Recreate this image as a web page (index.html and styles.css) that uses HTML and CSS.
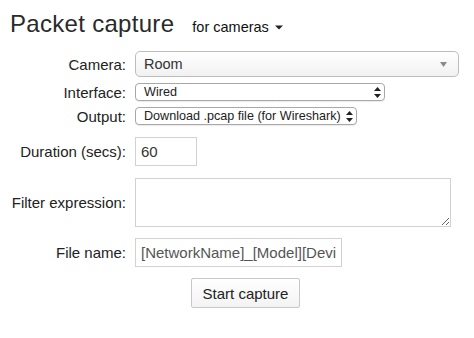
FILE: index.html
```html
<!DOCTYPE html>
<html>
<head>
<meta charset="utf-8">
<link rel="stylesheet" href="styles.css">
</head>
<body>
<div class="page">
  <div class="header">
    <h1 class="title">Packet capture</h1>
    <span class="scope">for cameras <svg class="caret" width="8" height="5" viewBox="0 0 8 5"><path d="M0 0.5H8L4 4.5Z" fill="#222"/></svg></span>
  </div>
  <form class="form">
    <div class="row row-camera">
      <label class="label">Camera:</label>
      <span class="select-wrap">
        <select class="select-big"><option>Room</option></select>
        <svg class="tri" width="7" height="5" viewBox="0 0 7 5"><path d="M0 0H7L3.5 5Z" fill="#8a8a8a"/></svg>
      </span>
    </div>
    <div class="row row-tight">
      <label class="label">Interface:</label>
      <span class="select-wrap">
        <select class="select-small sel-interface"><option>Wired</option></select>
        <svg class="updown" width="7" height="11" viewBox="0 0 7 11"><path d="M3.5 0L7 4H0Z M0 7H7L3.5 11Z" fill="#222"/></svg>
      </span>
    </div>
    <div class="row row-tight">
      <label class="label">Output:</label>
      <span class="select-wrap">
        <select class="select-small sel-output"><option>Download .pcap file (for Wireshark)</option></select>
        <svg class="updown" width="7" height="11" viewBox="0 0 7 11"><path d="M3.5 0L7 4H0Z M0 7H7L3.5 11Z" fill="#222"/></svg>
      </span>
    </div>
    <div class="row row-duration">
      <label class="label">Duration (secs):</label>
      <input class="text-input duration" type="text" value="60">
    </div>
    <div class="row row-filter">
      <label class="label">Filter expression:</label>
      <textarea class="textarea"></textarea>
    </div>
    <div class="row row-file">
      <label class="label">File name:</label>
      <input class="text-input filename" type="text" value="[NetworkName]_[Model][DeviceName]_[Date].pcap">
    </div>
    <div class="row row-button">
      <button type="button" class="button">Start capture</button>
    </div>
  </form>
</div>
</body>
</html>
```
FILE: styles.css
```css
html, body {
  margin: 0;
  padding: 0;
  background: #ffffff;
}

body {
  font-family: "Liberation Sans", Arial, Helvetica, sans-serif;
  color: #222222;
}

.page {
  width: 474px;
  height: 338px;
  overflow: hidden;
}

.header {
  display: flex;
  align-items: baseline;
  padding: 10px 0 0 10px;
  height: 28px;
}

.title {
  margin: 0;
  font-size: 24px;
  line-height: 28px;
  font-weight: normal;
  letter-spacing: 0.3px;
  color: #2a2a2a;
}

.scope {
  margin-left: 18px;
  font-size: 14.5px;
  color: #111111;
}

.caret {
  margin-left: 2px;
  vertical-align: 2px;
}

.form {
  margin: 13px 0 0 0;
}

.row {
  display: flex;
  align-items: center;
}

.label {
  width: 126px;
  padding-right: 9px;
  text-align: right;
  font-size: 15px;
  line-height: 17px;
  color: #222222;
  flex: none;
  box-sizing: content-box;
}

.row-tight { margin-top: 6px; }
.row-duration { margin-top: 12px; }
.row-filter { margin-top: 12px; }
.row-file { margin-top: 11px; }
.row-button { margin-top: 11px; padding-left: 191px; }

.select-wrap {
  position: relative;
  display: block;
}

select {
  -webkit-appearance: none;
  appearance: none;
  display: block;
  margin: 0;
  font-family: "Liberation Sans", Arial, Helvetica, sans-serif;
  color: #222222;
  box-sizing: border-box;
  outline: none;
}

.select-big {
  width: 324px;
  height: 26px;
  border: 1px solid #bdbdbd;
  border-radius: 5px;
  background: linear-gradient(#ffffff, #f1f1f1);
  font-size: 14.5px;
  padding: 0 0 0 8px;
  color: #333333;
}

.tri {
  position: absolute;
  right: 12px;
  top: 11px;
}

.select-small {
  height: 18px;
  border: 1px solid #a8a8a8;
  border-radius: 4px;
  background: #ffffff;
  box-shadow: 0 1px 1px rgba(0, 0, 0, 0.08);
  font-size: 12.6px;
  padding: 0 0 0 8px;
  line-height: 16px;
}

.sel-interface { width: 250px; }
.sel-output { width: 222px; }

.updown {
  position: absolute;
  right: 4px;
  top: 4px;
}

.text-input {
  display: block;
  margin: 0;
  height: 29px;
  box-sizing: border-box;
  border: 1px solid #d2d2d2;
  padding: 0 5px;
  font-family: "Liberation Sans", Arial, Helvetica, sans-serif;
  font-size: 15px;
  color: #444444;
  outline: none;
  background: #ffffff;
}

.duration {
  width: 62px;
  color: #333333;
}

.filename {
  width: 207px;
  color: #555555;
}

.textarea {
  display: block;
  margin: 0;
  width: 316px;
  height: 49px;
  box-sizing: border-box;
  border: 1px solid #d2d2d2;
  padding: 4px;
  font-family: "Liberation Sans", Arial, Helvetica, sans-serif;
  font-size: 15px;
  outline: none;
}

.button {
  display: block;
  margin: 0;
  width: 109px;
  height: 30px;
  box-sizing: border-box;
  border: 1px solid #c8c8c8;
  border-radius: 2px;
  background: linear-gradient(#ffffff, #f3f3f3);
  font-family: "Liberation Sans", Arial, Helvetica, sans-serif;
  font-size: 15px;
  color: #222222;
  padding: 0;
}
```
